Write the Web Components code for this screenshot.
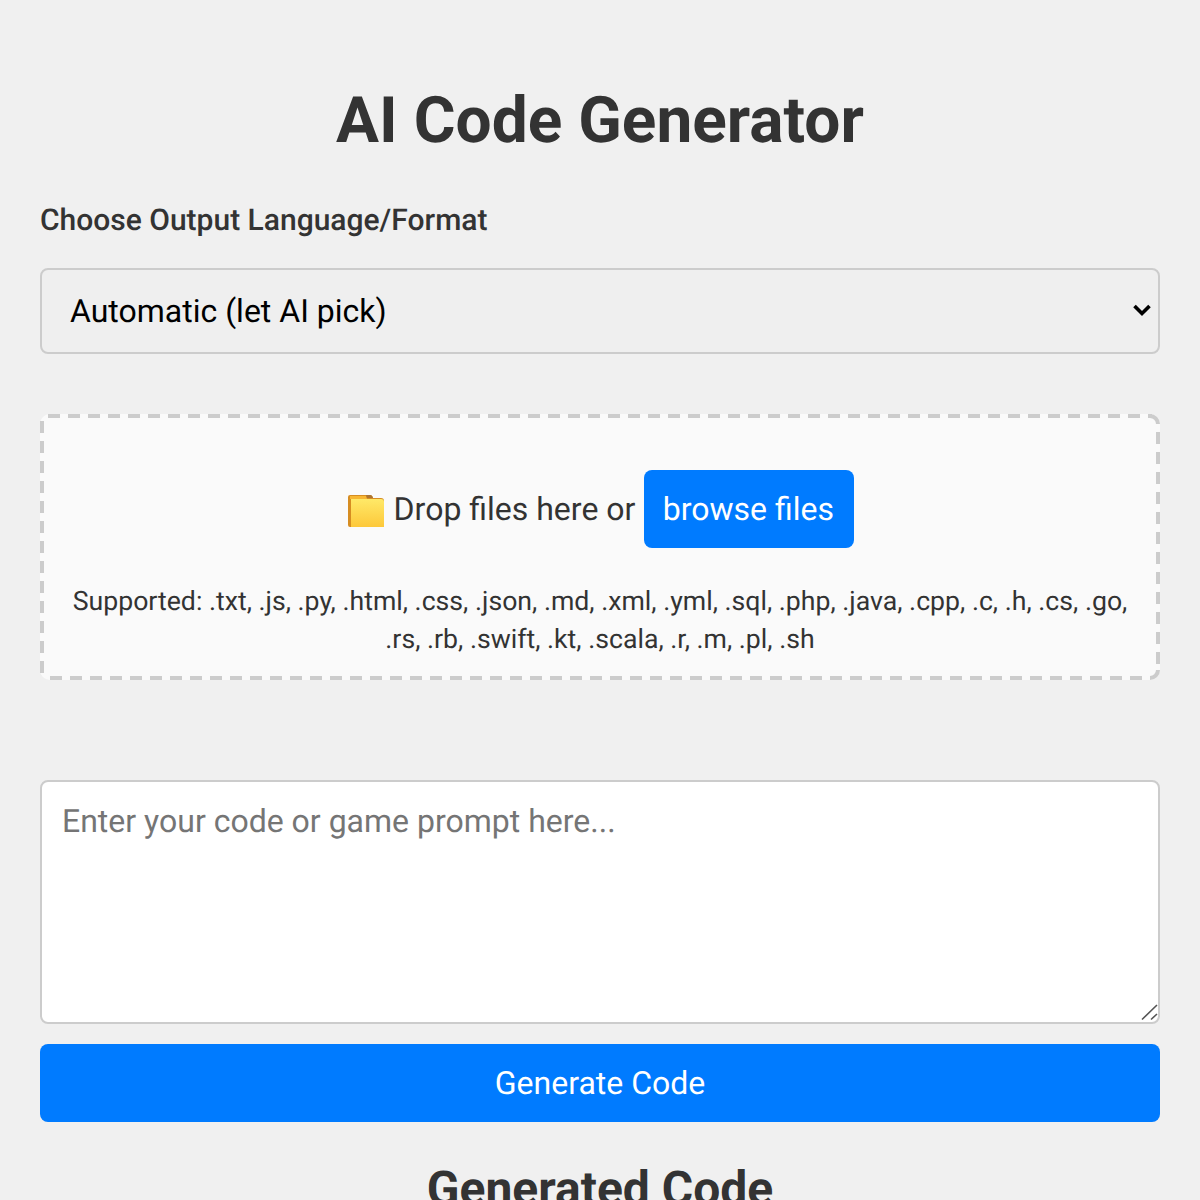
<!DOCTYPE html>
<html lang="en">
<head>
<meta charset="utf-8">
<title>AI Code Generator</title>
<style>
    html, body { margin: 0; background: #f0f0f0; }
    body { font-family: Roboto, "Liberation Sans", sans-serif; color: #333; overflow: hidden; height: 1200px; text-rendering: geometricPrecision; }
</style>
</head>
<body>
<code-generator-app>
    <format-picker label="Choose Output Language/Format" value="Automatic (let AI pick)"></format-picker>
    <file-drop supported="Supported: .txt, .js, .py, .html, .css, .json, .md, .xml, .yml, .sql, .php, .java, .cpp, .c, .h, .cs, .go, .rs, .rb, .swift, .kt, .scala, .r, .m, .pl, .sh"></file-drop>
    <prompt-box placeholder="Enter your code or game prompt here..."></prompt-box>
    <generate-button>Generate Code</generate-button>
</code-generator-app>

<script>
class CodeGeneratorApp extends HTMLElement {
    constructor() {
        super();
        this.attachShadow({ mode: 'open' });
        this.shadowRoot.innerHTML = `
            <style>
                :host {
                    display: block;
                    padding: 0 40px;
                }
                h1 {
                    margin: 0;
                    padding-top: 81px;
                    font-size: 64px;
                    line-height: 80px;
                    font-weight: 700;
                    text-align: center;
                    color: #333;
                }
                h2 {
                    margin: 37px 0 0;
                    font-size: 48px;
                    line-height: 60px;
                    font-weight: 700;
                    text-align: center;
                    color: #333;
                }
            </style>
            <h1>AI Code Generator</h1>
            <slot></slot>
            <h2>Generated Code</h2>
        `;
    }
}

class FormatPicker extends HTMLElement {
    constructor() {
        super();
        this.attachShadow({ mode: 'open' });
    }

    connectedCallback() {
        const label = this.getAttribute('label') || '';
        const value = this.getAttribute('value') || '';
        this.shadowRoot.innerHTML = `
            <style>
                :host {
                    display: block;
                    margin-top: 40px;
                }
                label {
                    display: block;
                    font-size: 30px;
                    line-height: 40px;
                    font-weight: 500;
                    color: #333;
                }
                .wrap {
                    position: relative;
                    margin-top: 27px;
                }
                select {
                    display: block;
                    width: 100%;
                    height: 86px;
                    box-sizing: border-box;
                    appearance: none;
                    padding: 0 28px;
                    border: 2px solid #ccc;
                    border-radius: 8px;
                    background: #efefef;
                    color: #000;
                    font: 400 32px Roboto, sans-serif;
                    text-rendering: geometricPrecision;
                }
                svg {
                    position: absolute;
                    right: 8px;
                    top: 35px;
                }
            </style>
            <label for="fmt">${label}</label>
            <div class="wrap">
                <select id="fmt"><option>${value}</option></select>
                <svg width="20" height="14" viewBox="0 0 20 14" fill="none" stroke="#000" stroke-width="3.6">
                    <path d="M2.5 3l7.500 7.500 7.500-7.500"></path>
                </svg>
            </div>
        `;
    }
}

class FileDrop extends HTMLElement {
    constructor() {
        super();
        this.attachShadow({ mode: 'open' });
    }

    connectedCallback() {
        const supported = this.getAttribute('supported') || '';
        this.shadowRoot.innerHTML = `
            <style>
                :host {
                    display: block;
                    position: relative;
                    margin-top: 60px;
                    height: 266px;
                    box-sizing: border-box;
                    padding: 52px 20px 0;
                    border: 4px solid transparent;
                    border-radius: 10px;
                    background: #fafafa;
                    text-align: center;
                    color: #333;
                }
                .row {
                    display: flex;
                    justify-content: center;
                    align-items: center;
                    gap: 9px;
                    padding-left: 2px;
                    font-size: 32px;
                }
                .folder {
                    display: flex;
                    gap: 10px;
                    align-items: center;
                }
                .folder svg {
                    transform: translateY(2px);
                }
                button {
                    width: 210px;
                    height: 78px;
                    padding: 0 2px 0 0;
                    border: 0;
                    border-radius: 8px;
                    background: #007bff;
                    color: #fff;
                    font: 400 32px Roboto, sans-serif;
                    text-rendering: geometricPrecision;
                }
                p {
                    margin: 34px 0 0;
                    font-size: 26.67px;
                    line-height: 38px;
                }
                .edge {
                    position: absolute;
                    left: -4px;
                    top: -4px;
                }
            </style>
            <div class="row">
                <span class="folder">
                    <svg width="36" height="32" viewBox="0 0 36 32">
                        <defs>
                            <linearGradient id="front" x1="0" y1="0" x2="0" y2="1">
                                <stop offset="0" stop-color="#ffe968"></stop>
                                <stop offset="1" stop-color="#fdc83a"></stop>
                            </linearGradient>
                        </defs>
                        <path d="M0 2a2 2 0 0 1 2-2h20c1.500 0 2.500 1 3 3h8a3 3 0 0 1 3 3v26H2a2 2 0 0 1-2-2z" fill="#d68d22"></path>
                        <path d="M2 1h16l1 3H2z" fill="#f7b733"></path>
                        <path d="M18 0h4c1.500 0 2.500 1 3 3H19z" fill="#ad7530"></path>
                        <path d="M3 4h30a3 3 0 0 1 3 3v25H3z" fill="url(#front)"></path>
                    </svg>
                    <span>Drop files here or</span>
                </span>
                <button type="button">browse files</button>
            </div>
            <p>${supported}</p>
            <svg class="edge" width="1120" height="266" viewBox="0 0 1120 266" fill="none" stroke="#ccc" stroke-width="4">
                <path d="M8 2H1112" stroke-dasharray="12 8"></path>
                <path d="M10 264H1110" stroke-dasharray="12 8"></path>
                <path d="M2 7V259" stroke-dasharray="12 8"></path>
                <path d="M1118 18V258" stroke-dasharray="12 8"></path>
                <path d="M1110 2A8 8 0 0 1 1118 10"></path>
                <path d="M1118 256A8 8 0 0 1 1110 264"></path>
            </svg>
        `;
    }
}

class PromptBox extends HTMLElement {
    constructor() {
        super();
        this.attachShadow({ mode: 'open' });
    }

    connectedCallback() {
        const placeholder = this.getAttribute('placeholder') || '';
        this.shadowRoot.innerHTML = `
            <style>
                :host {
                    display: block;
                    position: relative;
                    margin-top: 100px;
                }
                textarea {
                    display: block;
                    width: 100%;
                    height: 244px;
                    box-sizing: border-box;
                    padding: 20px;
                    border: 2px solid #ccc;
                    border-radius: 8px;
                    background: #fff;
                    resize: none;
                    font: 400 32px/38px Roboto, sans-serif;
                    color: #333;
                    text-rendering: geometricPrecision;
                }
                textarea::placeholder {
                    color: #757575;
                    opacity: 1;
                }
                svg {
                    position: absolute;
                    right: 2px;
                    bottom: 2px;
                }
            </style>
            <textarea placeholder="${placeholder}"></textarea>
            <svg width="18" height="18" viewBox="0 0 18 18" fill="none" stroke="#555" stroke-width="1.6">
                <path d="M2 15.500L17 1M11 15.500l6-5.500"></path>
            </svg>
        `;
    }
}

class GenerateButton extends HTMLElement {
    constructor() {
        super();
        this.attachShadow({ mode: 'open' });
        this.shadowRoot.innerHTML = `
            <style>
                :host {
                    display: block;
                    margin-top: 20px;
                }
                button {
                    display: block;
                    width: 100%;
                    height: 78px;
                    border: 0;
                    border-radius: 8px;
                    background: #007bff;
                    color: #fff;
                    font: 400 32px Roboto, sans-serif;
                    text-rendering: geometricPrecision;
                }
            </style>
            <button type="button"><slot></slot></button>
        `;
    }
}

customElements.define('code-generator-app', CodeGeneratorApp);
customElements.define('format-picker', FormatPicker);
customElements.define('file-drop', FileDrop);
customElements.define('prompt-box', PromptBox);
customElements.define('generate-button', GenerateButton);
</script>
</body>
</html>
